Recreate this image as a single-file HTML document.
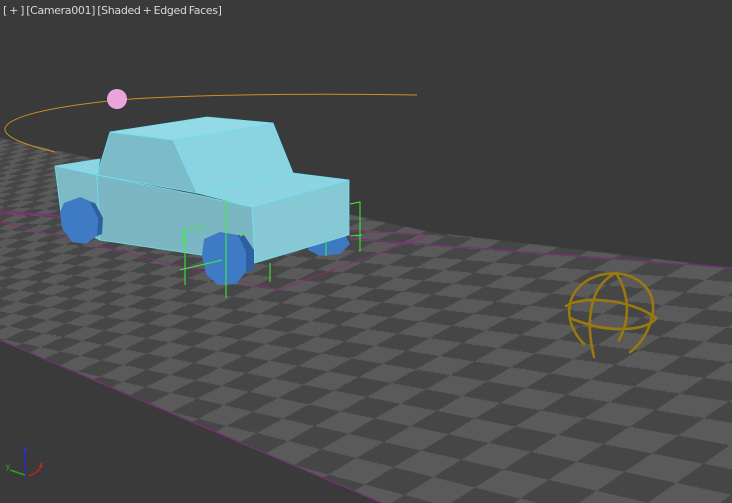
<!DOCTYPE html>
<html><head><meta charset="utf-8"><style>
html,body{margin:0;padding:0;background:#3a3a3a;width:732px;height:503px;overflow:hidden}
#c{position:absolute;left:0;top:0}
svg{position:absolute;left:0;top:0}
.lbl{position:absolute;left:3px;top:4px;font:11px "DejaVu Sans",sans-serif;color:#d8d8d8;letter-spacing:-0.35px;word-spacing:-1px}
</style></head><body>
<canvas id="c" width="732" height="503"></canvas>
<div class="lbl">[ + ] [Camera001] [Shaded + Edged Faces]</div>
<svg width="732" height="503" viewBox="0 0 732 503">
<line x1="0" y1="211" x2="732" y2="268" stroke="#7a2f7a" stroke-width="1.2"/>
<line x1="0" y1="340" x2="382" y2="503" stroke="#7a2f7a" stroke-width="1.2"/>
<polyline points="0,213 428,235 278,290 0,222" fill="none" stroke="#8a2e78" stroke-width="1.2" opacity="0.8"/>
<path d="M417,95 C300,93 180,95 118,100 C60,106 10,115 5,128 C3,138 30,146 55,152" fill="none" stroke="#c8901e" stroke-width="1"/>
<circle cx="117" cy="99" r="10" fill="#e9a5d9"/>
<polygon points="312,238 330,232 345,235 350,244 340,254 320,256 308,250" fill="#3e78c0"/>
<polygon points="55,166 100,159 97,175" fill="#8fd4e2" stroke="#6fe0f0" stroke-width="0.8"/>
<polygon points="55,166 97,175 100,240 62,222" fill="#7dbac6" stroke="#6fe0f0" stroke-width="0.8"/>
<polygon points="97,175 197,195 252,207 255,263 100,240" fill="#7bb6c2" stroke="#6fe0f0" stroke-width="0.8"/>
<polygon points="252,207 349,180 349,235 255,263" fill="#86c8d4" stroke="#6fe0f0" stroke-width="0.8"/>
<polygon points="197,193 293,173 349,180 252,207" fill="#8dd4e2" stroke="#6fe0f0" stroke-width="0.8"/>
<polygon points="110,132 173,140 197,193 97,175" fill="#7cbcc8" stroke="#6fe0f0" stroke-width="0.8"/>
<polygon points="110,132 207,117 273,123 173,140" fill="#94dae6" stroke="#6fe0f0" stroke-width="0.8"/>
<polygon points="173,140 273,123 293,173 197,193" fill="#8ad4e2" stroke="#6fe0f0" stroke-width="0.8"/>
<polygon points="64,203 80,197 92,202 98,218 97,236 86,244 72,242 62,228 60,212" fill="#3f7bc4"/>
<polygon points="90,202 98,218 97,236 102,234 103,218 95,203" fill="#2f5f9e"/>
<polygon points="204,239 220,232 238,235 246,252 246,272 236,284 218,285 206,274 202,256" fill="#3f7bc4"/>
<polygon points="238,235 246,252 246,272 254,270 254,250 244,235" fill="#2f5f9e"/>
<g stroke="#3cf03c" stroke-width="1" fill="none">
<line x1="226" y1="200" x2="226" y2="298"/>
<polyline points="183,245 183,230 205,226"/>
<line x1="185" y1="232" x2="185" y2="285"/>
<line x1="180" y1="270" x2="222" y2="260"/>
<line x1="270" y1="263" x2="270" y2="282"/>
<line x1="240" y1="236" x2="247" y2="233"/>
<polyline points="350,204 360,202 360,252"/>
<line x1="326" y1="240" x2="326" y2="256"/>
<line x1="350" y1="236" x2="362" y2="235"/>
</g>
<g stroke="#9a7810" stroke-width="2.6" fill="none" stroke-linecap="round">
<path d="M584,344 C560,320 565,285 600,275 C630,268 655,285 653,310 C651,330 640,345 630,352"/>
<path d="M566,306 C580,296 630,298 656,318 C650,330 610,335 570,318"/>
<path d="M616,273 C590,285 585,320 594,357"/>
<path d="M616,273 C630,295 630,320 619,340"/>
</g>
<g stroke-width="1.5" fill="none">
<line x1="25" y1="475" x2="25" y2="447" stroke="#2a2ac8"/>
<line x1="25" y1="475" x2="10" y2="470" stroke="#2aa02a"/>
<path d="M28,476 C35,474 40,470 42,465" stroke="#c02020"/>
</g>
<text x="23" y="452" font-family="Liberation Sans" font-size="8" fill="#3a3ad8">z</text>
<text x="6" y="469" font-family="Liberation Sans" font-size="8" fill="#30b030">y</text>
<text x="39" y="467" font-family="Liberation Sans" font-size="8" fill="#d03030">x</text>
</svg>
<script>
(function(){
var cv=document.getElementById('c'),ctx=cv.getContext('2d');
var W=732,Hh=503;
var V1=[-900,146],V2=[2500,-800],O=[400,243],a=0.02,b=0.009;
var M=[[a*V1[0],b*V2[0],O[0]],[a*V1[1],b*V2[1],O[1]],[a,b,1]];
function inv(m){var A=m[0][0],B=m[0][1],C=m[0][2],D=m[1][0],E=m[1][1],F=m[1][2],G=m[2][0],H=m[2][1],I=m[2][2];
var det=A*(E*I-F*H)-B*(D*I-F*G)+C*(D*H-E*G);
return [[(E*I-F*H)/det,(C*H-B*I)/det,(B*F-C*E)/det],[(F*G-D*I)/det,(A*I-C*G)/det,(C*D-A*F)/det],[(D*H-E*G)/det,(B*G-A*H)/det,(A*E-B*D)/det]];}
var N=inv(M);
var img=ctx.createImageData(W,Hh),d=img.data;
for(var y=0;y<Hh;y++)for(var x=0;x<W;x++){
var u=N[0][0]*x+N[0][1]*y+N[0][2],v=N[1][0]*x+N[1][1]*y+N[1][2],w=N[2][0]*x+N[2][1]*y+N[2][2];
var s=u/w,t=v/w,c=((Math.floor(s)+Math.floor(t))&1)?90:70;
if(w<=0)c=58;var i=(y*W+x)*4;d[i]=d[i+1]=d[i+2]=c;d[i+3]=255;}
ctx.putImageData(img,0,0);
ctx.globalCompositeOperation='destination-in';
ctx.beginPath();ctx.moveTo(0,138);ctx.lineTo(100,160);ctx.lineTo(430,232);ctx.lineTo(732,268);ctx.lineTo(732,503);ctx.lineTo(382,503);ctx.lineTo(0,340);ctx.closePath();ctx.fill();
})();
</script>
</body></html>
